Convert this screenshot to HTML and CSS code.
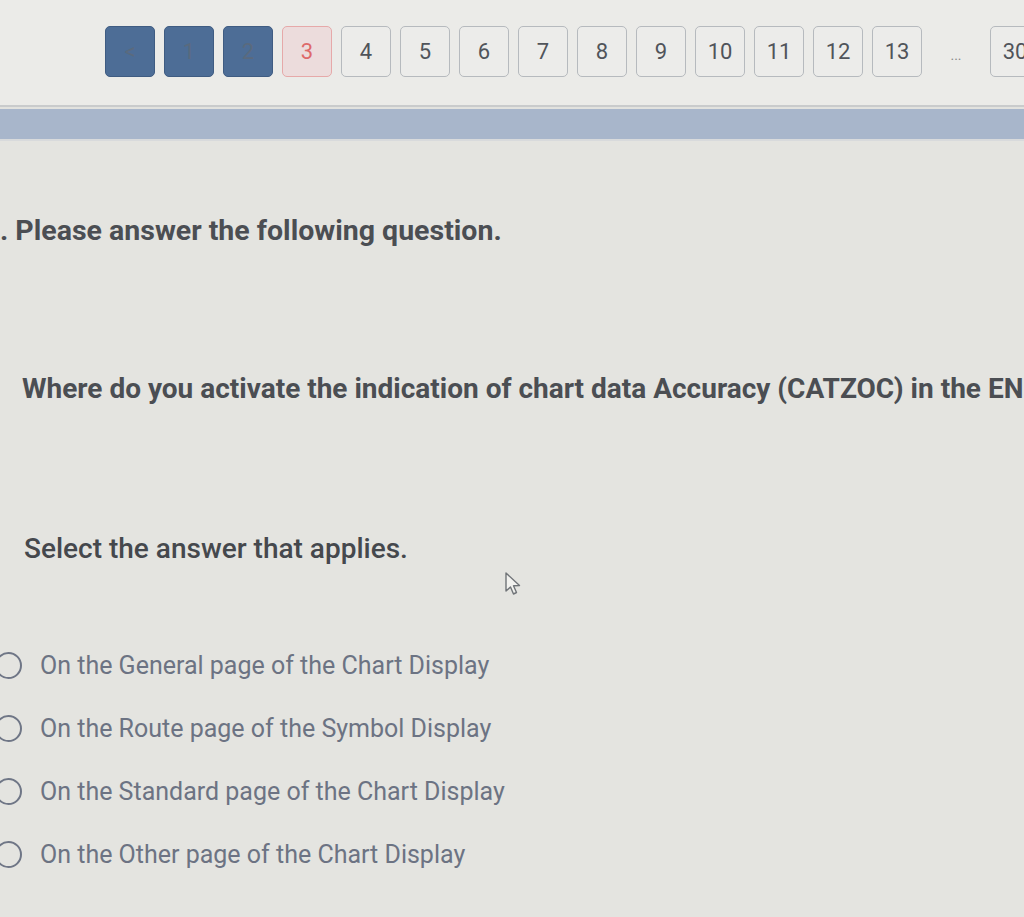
FILE: index.html
```html
<!DOCTYPE html>
<html>
<head>
<meta charset="utf-8">
<link rel="stylesheet" href="styles.css">
</head>
<body>
<div class="page">
  <header class="pager-bar">
    <nav class="pager">
      <span class="pg done">&lt;</span>
      <span class="pg done">1</span>
      <span class="pg done">2</span>
      <span class="pg current">3</span>
      <span class="pg">4</span>
      <span class="pg">5</span>
      <span class="pg">6</span>
      <span class="pg">7</span>
      <span class="pg">8</span>
      <span class="pg">9</span>
      <span class="pg">10</span>
      <span class="pg">11</span>
      <span class="pg">12</span>
      <span class="pg">13</span>
      <span class="pg gap">...</span>
      <span class="pg">30</span>
    </nav>
  </header>
  <div class="title-bar"></div>
  <main class="content">
    <h1 class="instr">. Please answer the following question.</h1>
    <p class="question">Where do you activate the indication of chart data Accuracy (CATZOC) in the ENC?</p>
    <p class="select">Select the answer that applies.</p>
    <ul class="options">
      <li class="opt"><span class="radio"></span><span class="label">On the General page of the Chart Display</span></li>
      <li class="opt"><span class="radio"></span><span class="label">On the Route page of the Symbol Display</span></li>
      <li class="opt"><span class="radio"></span><span class="label">On the Standard page of the Chart Display</span></li>
      <li class="opt"><span class="radio"></span><span class="label">On the Other page of the Chart Display</span></li>
    </ul>
    <svg class="cursor" width="20" height="26" viewBox="0 0 20 26">
      <path d="M3 2 L3 20 L7.5 16 L10.5 23 L13.5 21.5 L10.5 14.8 L16.5 14.5 Z" fill="#f2f2ef" stroke="#707478" stroke-width="1.4" stroke-linejoin="round"/>
    </svg>
  </main>
</div>
</body>
</html>
```
FILE: styles.css
```css
html, body {
  margin: 0;
  padding: 0;
}
body {
  width: 1024px;
  height: 917px;
  overflow: hidden;
  background: #e2e2de;
  font-family: Roboto, "Liberation Sans", sans-serif;
}
.page {
  display: flex;
  flex-direction: column;
  height: 917px;
}
.pager-bar {
  height: 107px;
  background: #ebebe8;
  border-bottom: 2px solid #c9cbcc;
  box-sizing: border-box;
  padding-top: 26px;
  padding-left: 105px;
  overflow: hidden;
}
.pager {
  display: flex;
  gap: 9px;
  width: 1000px;
}
.pg {
  flex: 0 0 auto;
  width: 50px;
  height: 51px;
  box-sizing: border-box;
  border: 1.5px solid #b6babe;
  border-radius: 5px;
  background: #ececea;
  color: #50545a;
  font-size: 22px;
  display: flex;
  align-items: center;
  justify-content: center;
}
.pg.done {
  background: #4d6d96;
  border-color: #3f5c82;
  color: #5a6a7e;
}
.pg.current {
  background: #ecdcdc;
  border-color: #e6a9a9;
  color: #de6a6a;
}
.pg.gap {
  border-color: transparent;
  background: transparent;
  font-size: 14px;
  color: #888;
  padding-top: 6px;
}
.title-bar {
  height: 30px;
  margin-top: 2px;
  background: #a8b6cb;
  border-bottom: 2px solid #d8dadc;
}
.content {
  position: relative;
  flex: 1;
  background: #e4e4e0;
  padding-top: 72px;
  overflow: hidden;
}
.instr {
  margin: 0;
  padding-left: 0;
  font-size: 28.5px;
  font-weight: 700;
  color: #4b4e53;
  line-height: 36px;
}
.question {
  margin: 123px 0 0 22px;
  font-size: 28px;
  font-weight: 700;
  color: #4b4e53;
  white-space: nowrap;
  line-height: 34px;
}
.select {
  margin: 126px 0 0 24px;
  font-size: 28px;
  font-weight: 500;
  color: #45484d;
  line-height: 34px;
}
.options {
  list-style: none;
  margin: 82px 0 0 0;
  padding: 0;
  display: flex;
  flex-direction: column;
  gap: 29px;
}
.opt {
  display: flex;
  align-items: center;
  height: 34px;
}
.radio {
  flex: 0 0 auto;
  width: 27px;
  height: 27px;
  box-sizing: border-box;
  border: 2px solid #6f7686;
  border-radius: 50%;
  margin-left: -5px;
  margin-right: 18px;
}
.label {
  font-size: 25px;
  color: #6c7383;
}
.cursor {
  position: absolute;
  left: 503px;
  top: 430px;
}
```
